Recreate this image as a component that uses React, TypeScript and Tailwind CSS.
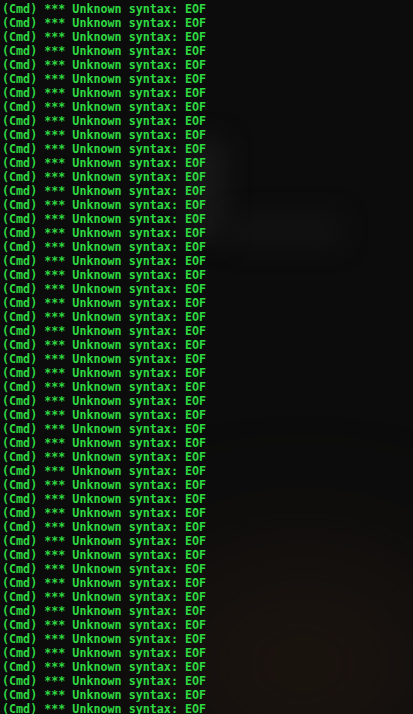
const lines = Array.from({ length: 51 }, (_, i) => i);

export default function App() {
  return (
    <div className="relative h-[714px] w-[413px] overflow-hidden bg-[#0c0c0c]">
      {/* faint blurred desktop showing through the translucent terminal */}
      <div className="absolute left-[185px] top-[140px] h-[100px] w-[40px] rounded-sm bg-[#171717] blur-md" />
      <div className="absolute left-[230px] top-[215px] h-[30px] w-[110px] bg-[#121212] blur-md" />
      <div className="absolute bottom-[-60px] right-[-40px] h-[220px] w-[300px] rounded-full bg-[#2a1c12] opacity-50 blur-3xl" />
      <div className="relative pl-[2px] pt-[2px] font-['DejaVu_Sans_Mono',monospace] text-[11.7px] leading-[14px] font-semibold text-[#2fd942]">
        {lines.map((i) => (
          <div key={i} className="whitespace-pre">
            (Cmd) *** Unknown syntax: EOF
          </div>
        ))}
      </div>
    </div>
  );
}
